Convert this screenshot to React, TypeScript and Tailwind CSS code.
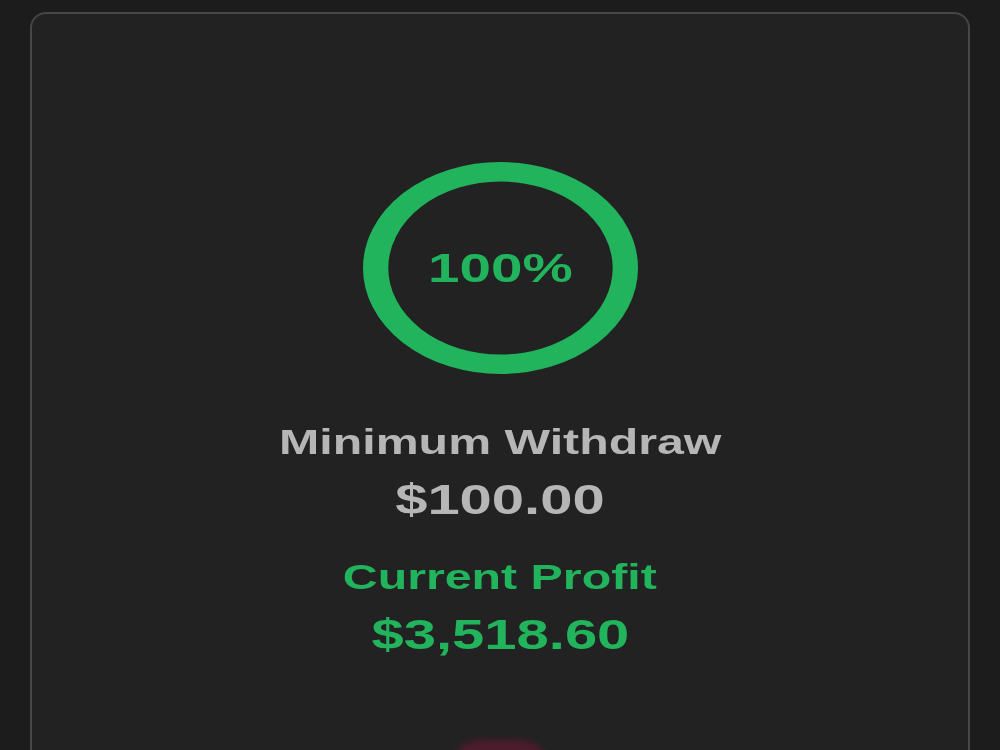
import React from "react";

export default function App() {
  return (
    <div
      className="w-[1000px] h-[750px] overflow-hidden bg-[#1c1c1c] pt-[12px] px-[30px]"
      style={{ fontFamily: '"Liberation Sans", Arial, sans-serif' }}
    >
      <div className="min-h-[800px] rounded-[16px] border-2 border-[#474747] bg-[#222222] flex flex-col items-center pt-[148px]">
        <div className="relative shrink-0 w-[275px] h-[212px] flex items-center justify-center">
          <svg
            className="absolute inset-0 w-full h-full"
            viewBox="0 0 100 100"
            preserveAspectRatio="none"
          >
            <circle cx="50" cy="50" r="45.4" fill="none" stroke="#22b45c" strokeWidth="9.2" />
          </svg>
          <div className="relative text-[41px] leading-none font-bold text-[#22b45c] scale-x-[1.38]">
            100%
          </div>
        </div>
        <div className="shrink-0 mt-[50px] text-[35px] leading-none font-bold text-[#b6b6b6] scale-x-[1.38] whitespace-nowrap">
          Minimum Withdraw
        </div>
        <div className="shrink-0 mt-[20px] text-[42px] leading-none font-bold text-[#b6b6b6] scale-x-[1.38]">
          $100.00
        </div>
        <div className="shrink-0 mt-[38px] text-[35px] leading-none font-bold text-[#22b45c] scale-x-[1.38] whitespace-nowrap">
          Current Profit
        </div>
        <div className="shrink-0 mt-[20px] text-[42px] leading-none font-bold text-[#22b45c] scale-x-[1.38]">
          $3,518.60
        </div>
        <div className="shrink-0 mt-[84px] w-[100px] h-[60px] rounded-full bg-[#4d1c2c] blur-[3px]" />
      </div>
    </div>
  );
}
